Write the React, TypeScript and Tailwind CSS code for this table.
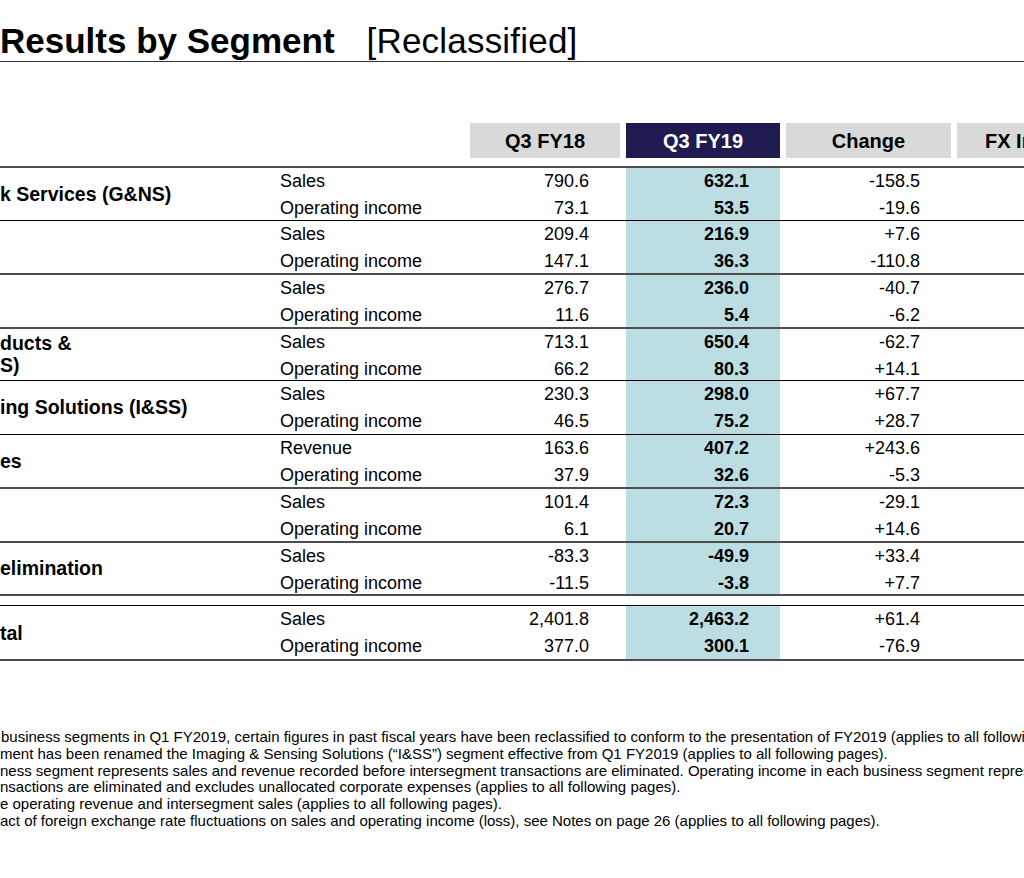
import React from 'react';

type Segment = {
  name: string[];
  labels: [string, string];
  fy18: [string, string];
  fy19: [string, string];
  change: [string, string];
  line: 'gray' | 'black';
};

const SEGMENTS: Segment[] = [
  { name: ['k Services (G&NS)'], labels: ['Sales', 'Operating income'], fy18: ['790.6', '73.1'], fy19: ['632.1', '53.5'], change: ['-158.5', '-19.6'], line: 'gray' },
  { name: [], labels: ['Sales', 'Operating income'], fy18: ['209.4', '147.1'], fy19: ['216.9', '36.3'], change: ['+7.6', '-110.8'], line: 'black' },
  { name: [], labels: ['Sales', 'Operating income'], fy18: ['276.7', '11.6'], fy19: ['236.0', '5.4'], change: ['-40.7', '-6.2'], line: 'gray' },
  { name: ['ducts &', 'S)'], labels: ['Sales', 'Operating income'], fy18: ['713.1', '66.2'], fy19: ['650.4', '80.3'], change: ['-62.7', '+14.1'], line: 'gray' },
  { name: ['ing Solutions (I&SS)'], labels: ['Sales', 'Operating income'], fy18: ['230.3', '46.5'], fy19: ['298.0', '75.2'], change: ['+67.7', '+28.7'], line: 'black' },
  { name: ['es'], labels: ['Revenue', 'Operating income'], fy18: ['163.6', '37.9'], fy19: ['407.2', '32.6'], change: ['+243.6', '-5.3'], line: 'black' },
  { name: [], labels: ['Sales', 'Operating income'], fy18: ['101.4', '6.1'], fy19: ['72.3', '20.7'], change: ['-29.1', '+14.6'], line: 'gray' },
  { name: ['elimination'], labels: ['Sales', 'Operating income'], fy18: ['-83.3', '-11.5'], fy19: ['-49.9', '-3.8'], change: ['+33.4', '+7.7'], line: 'gray' },
];

const TOTAL = {
  name: ['tal'],
  labels: ['Sales', 'Operating income'] as [string, string],
  fy18: ['2,401.8', '377.0'] as [string, string],
  fy19: ['2,463.2', '300.1'] as [string, string],
  change: ['+61.4', '-76.9'] as [string, string],
};

const NOTES = [
  ' business segments in Q1 FY2019, certain figures in past fiscal years have been reclassified to conform to the presentation of FY2019 (applies to all following pages).',
  'ment has been renamed the Imaging & Sensing Solutions (“I&SS”) segment effective from Q1 FY2019 (applies to all following pages).',
  'ness segment represents sales and revenue recorded before intersegment transactions are eliminated. Operating income in each business segment represents',
  'nsactions are eliminated and excludes unallocated corporate expenses (applies to all following pages).',
  'e operating revenue and intersegment sales (applies to all following pages).',
  'act of foreign exchange rate fluctuations on sales and operating income (loss), see Notes on page 26 (applies to all following pages).',
];

function BlockBody({ name, labels, fy18, fy19, change }: Omit<Segment, 'line'>) {
  return (
    <div className="flex h-full">
      <div className="w-[280px] shrink-0 flex flex-col justify-center font-bold text-[19.5px] leading-[22px] whitespace-nowrap">
        {name.map((n) => (
          <span key={n}>{n}</span>
        ))}
      </div>
      <div className="w-[190px] shrink-0 flex flex-col text-[18px]">
        {labels.map((l, i) => (
          <span key={i} className="flex-1 flex items-center">{l}</span>
        ))}
      </div>
      <div className="w-[150px] shrink-0 flex flex-col text-[18px] pr-[31px]">
        {fy18.map((v, i) => (
          <span key={i} className="flex-1 flex items-center justify-end">{v}</span>
        ))}
      </div>
      <div className="w-[154px] shrink-0 ml-[6px] bg-[#bcdee2] flex flex-col text-[18px] font-bold pr-[31px]">
        {fy19.map((v, i) => (
          <span key={i} className="flex-1 flex items-center justify-end">{v}</span>
        ))}
      </div>
      <div className="w-[165px] shrink-0 ml-[6px] flex flex-col text-[18px] pr-[31px]">
        {change.map((v, i) => (
          <span key={i} className="flex-1 flex items-center justify-end">{v}</span>
        ))}
      </div>
    </div>
  );
}

export default function App() {
  return (
    <div className="w-[1024px] h-[878px] overflow-hidden bg-white text-black font-['Liberation_Sans',Arial,sans-serif]">
      <div className="pt-[23px] pb-[3px] border-b border-[#333] flex items-baseline whitespace-nowrap leading-[35px] text-[35px]">
        <span className="font-bold">Results by Segment</span>
        <span className="ml-[32px] tracking-[0.2px]">[Reclassified]</span>
      </div>

      <div className="mt-[61px] flex h-[35px] text-[20px] font-bold whitespace-nowrap">
        <div className="w-[470px] shrink-0" />
        <div className="w-[150px] shrink-0 bg-[#d9d9d9] flex items-center justify-center">Q3 FY18</div>
        <div className="w-[154px] shrink-0 ml-[6px] bg-[#1d1b4f] text-white flex items-center justify-center">Q3 FY19</div>
        <div className="w-[165px] shrink-0 ml-[6px] bg-[#d9d9d9] flex items-center justify-center">Change</div>
        <div className="w-[140px] shrink-0 ml-[6px] bg-[#d9d9d9] flex items-center pl-[28px]">FX Impact</div>
      </div>

      <div className="mt-[8px]">
        {SEGMENTS.map((s, i) => (
          <div
            key={i}
            className={
              s.line === 'gray'
                ? 'h-[53.5px] border-t-2 border-[#4d4d4d]'
                : 'h-[53.5px] border-t border-black'
            }
          >
            <BlockBody {...s} />
          </div>
        ))}
        <div className="h-[11px] border-t-2 border-[#4d4d4d]" />
        <div className="h-[56px] border-t border-black border-b-2 border-b-[#4d4d4d]">
          <BlockBody {...TOTAL} />
        </div>
      </div>

      <div className="mt-[68px] text-[15px] leading-[16.8px] whitespace-nowrap">
        {NOTES.map((n, i) => (
          <p key={i} className={i === 0 ? 'pl-[1px]' : ''}>{n}</p>
        ))}
      </div>
    </div>
  );
}
